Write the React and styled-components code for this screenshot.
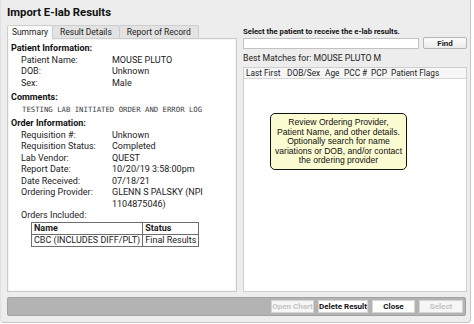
import React from 'react'
import styled, { createGlobalStyle } from 'styled-components'

const GlobalStyle = createGlobalStyle`
  html, body {
    margin: 0;
    padding: 0;
    background: #ffffff;
  }
  body {
    font-family: Roboto, "Liberation Sans", sans-serif;
    color: #1a1a1a;
  }
`

const patientRows = [
  ['Patient Name:', 'MOUSE PLUTO'],
  ['DOB:', 'Unknown'],
  ['Sex:', 'Male'],
]

const orderRows = [
  ['Requisition #:', 'Unknown'],
  ['Requisition Status:', 'Completed'],
  ['Lab Vendor:', 'QUEST'],
  ['Report Date:', '10/20/19 3:58:00pm'],
  ['Date Received:', '07/18/21'],
  ['Ordering Provider:', 'GLENN S PALSKY (NPI 1104875046)'],
]

const matchCols = [
  ['Last', 18],
  ['First', 23],
  ['DOB/Sex', 38],
  ['Age', 19],
  ['PCC #', 27],
  ['PCP', 20],
  ['Patient Flags', 77],
]

function App() {
  return (
    <>
      <GlobalStyle />
      <Window>
        <Title>Import E-lab Results</Title>
        <Main>
          <LeftColumn>
            <Tabs>
              <Tab $active>Summary</Tab>
              <Tab>Result Details</Tab>
              <Tab>Report of Record</Tab>
            </Tabs>
            <SummaryPanel>
              <Heading>Patient Information:</Heading>
              {patientRows.map(([label, value]) => (
                <Row key={label}>
                  <Label>{label}</Label>
                  <Value>{value}</Value>
                </Row>
              ))}
              <Heading $gap>Comments:</Heading>
              <Comment>TESTING LAB INITIATED ORDER AND ERROR LOG</Comment>
              <Heading $gap>Order Information:</Heading>
              {orderRows.map(([label, value]) => (
                <Row key={label}>
                  <Label>{label}</Label>
                  <Value>{value}</Value>
                </Row>
              ))}
              <Row>
                <Label>Orders Included:</Label>
              </Row>
              <OrdersTable>
                <thead>
                  <tr>
                    <th style={{ width: 102 }}>Name</th>
                    <th>Status</th>
                  </tr>
                </thead>
                <tbody>
                  <tr>
                    <td>CBC (INCLUDES DIFF/PLT)</td>
                    <td>Final Results</td>
                  </tr>
                </tbody>
              </OrdersTable>
            </SummaryPanel>
          </LeftColumn>
          <RightColumn>
            <SelectHeading>Select the patient to receive the e-lab results.</SelectHeading>
            <SearchRow>
              <SearchInput type="text" />
              <FindButton>Find</FindButton>
            </SearchRow>
            <MatchesLabel>Best Matches for: MOUSE PLUTO M</MatchesLabel>
            <MatchesTable>
              <MatchHeader>
                {matchCols.map(([name, w]) => (
                  <MatchCell key={name} style={{ width: w }}>{name}</MatchCell>
                ))}
              </MatchHeader>
              <Callout>
                Review Ordering Provider,<br />
                Patient Name, and other details.<br />
                Optionally search for name<br />
                variations or DOB, and/or contact<br />
                the ordering provider
              </Callout>
            </MatchesTable>
          </RightColumn>
        </Main>
        <ButtonBar>
          <BarButton disabled $w={43}>Open Chart</BarButton>
          <BarButton $w={50}>Delete Result</BarButton>
          <BarButton $w={43}>Close</BarButton>
          <BarButton disabled $w={44}>Select</BarButton>
        </ButtonBar>
      </Window>
    </>
  )
}

export default App

const Window = styled.div`
  width: 471px;
  height: 323px;
  box-sizing: border-box;
  background: #ededed;
  border-right: 1px solid #c6c6c6;
  border-bottom: 1px solid #c6c6c6;
  border-left: 1px solid #e0e0e0;
  border-bottom-right-radius: 4px;
  border-bottom-left-radius: 4px;
  display: flex;
  flex-direction: column;
`

const Title = styled.div`
  height: 25px;
  padding-left: 6px;
  display: flex;
  align-items: center;
  font-size: 11.3px;
  font-weight: 700;
  color: #111;
`

const Main = styled.div`
  display: flex;
  padding: 0 0 0 6px;
  gap: 4px;
  height: 267px;
`

const LeftColumn = styled.div`
  width: 230px;
  flex-shrink: 0;
  display: flex;
  flex-direction: column;
`

const Tabs = styled.div`
  height: 13px;
  display: flex;
  position: relative;
  z-index: 1;
`

const Tab = styled.div`
  box-sizing: border-box;
  height: 14px;
  padding: 0 7px;
  display: flex;
  align-items: center;
  font-size: 8.5px;
  color: #222;
  background: ${p => (p.$active ? '#fafafa' : '#e3e3e3')};
  border: 1px solid #cdcdcd;
  border-bottom: ${p => (p.$active ? '1px solid #fafafa' : '1px solid #cdcdcd')};
  margin-right: -1px;
  border-radius: 2px 2px 0 0;
  &:first-child {
    width: 46px;
    justify-content: center;
  }
`

const SummaryPanel = styled.div`
  flex: 1;
  box-sizing: border-box;
  background: #fff;
  border: 1px solid #cbcbcb;
  box-shadow: inset 0 0 0 1px #f4f4f4;
  padding: 4px 3px 0 3px;
  font-size: 9px;
  line-height: 11.5px;
`

const Heading = styled.div`
  font-weight: 700;
  color: #111;
  margin-top: ${p => (p.$gap ? '3px' : '0')};
`

const Row = styled.div`
  display: flex;
  padding-left: 10px;
`

const Label = styled.div`
  width: 91px;
  flex-shrink: 0;
  color: #222;
`

const Value = styled.div`
  width: 96px;
  color: #222;
`

const Comment = styled.div`
  padding-left: 11px;
  font-family: "DejaVu Sans Mono", "Liberation Mono", monospace;
  font-size: 7.3px;
  color: #3a3a3a;
`

const OrdersTable = styled.table`
  margin: 0 0 0 20px;
  border-collapse: collapse;
  width: 161px;
  font-size: 9px;
  line-height: 11px;
  th, td {
    border: 1px solid #6e6e6e;
    padding: 0 2px;
    text-align: left;
    white-space: nowrap;
    height: 11px;
  }
  th {
    font-weight: 700;
  }
`

const RightColumn = styled.div`
  width: 226px;
  box-sizing: border-box;
  flex-shrink: 0;
  padding-left: 2px;
  display: flex;
  flex-direction: column;
`

const SelectHeading = styled.div`
  height: 12px;
  display: flex;
  align-items: center;
  font-size: 7.7px;
  font-weight: 700;
  color: #111;
`

const SearchRow = styled.div`
  display: flex;
  gap: 4px;
  height: 12px;
`

const SearchInput = styled.input`
  box-sizing: border-box;
  width: 176px;
  height: 11px;
  margin: 1px 0 0 0;
  border: 1px solid #c2c2c2;
  background: #fff;
  padding: 0;
`

const FindButton = styled.button`
  box-sizing: border-box;
  width: 44px;
  height: 12px;
  padding: 0;
  border: 1px solid #b5b5b5;
  border-radius: 2px;
  background: linear-gradient(#fbfbfb, #ececec);
  font-family: Roboto, "Liberation Sans", sans-serif;
  font-size: 8px;
  font-weight: 700;
  color: #222;
`

const MatchesLabel = styled.div`
  height: 18px;
  display: flex;
  align-items: center;
  font-size: 8.7px;
  color: #222;
`

const MatchesTable = styled.div`
  flex: 1;
  position: relative;
  background: #fff;
  border: 1px solid #cfcfcf;
`

const MatchHeader = styled.div`
  display: flex;
  height: 10px;
  background: #f6f6f6;
  border-bottom: 1px solid #d6d6d6;
`

const MatchCell = styled.div`
  box-sizing: border-box;
  flex-shrink: 0;
  padding-left: 2px;
  display: flex;
  align-items: center;
  font-size: 8.3px;
  color: #222;
  white-space: nowrap;
`

const Callout = styled.div`
  position: absolute;
  left: 26px;
  top: 45px;
  width: 137px;
  height: 57px;
  box-sizing: border-box;
  background: #fcfcd2;
  border: 1.5px solid #111;
  border-radius: 5px;
  padding: 4px 0 0;
  text-align: center;
  font-family: "Liberation Sans", Arial, sans-serif;
  font-size: 8.6px;
  line-height: 9.6px;
  color: #111;
  white-space: nowrap;
`

const ButtonBar = styled.div`
  margin: 5px 4px 0 6px;
  height: 19px;
  box-sizing: border-box;
  background: #b3b3b3;
  border: 1px solid #a2a2a2;
  border-radius: 2px;
  display: flex;
  justify-content: flex-end;
  align-items: center;
  gap: 4px;
  padding-right: 2px;
`

const BarButton = styled.button`
  box-sizing: border-box;
  height: 13px;
  width: ${p => p.$w}px;
  padding: 0;
  border: 1px solid #d6d6d6;
  background: #fff;
  font-family: Roboto, "Liberation Sans", sans-serif;
  font-size: 8px;
  font-weight: 700;
  color: ${p => (p.disabled ? '#c4c4c4' : '#111')};
  white-space: nowrap;
  &:disabled {
    background: #f6f6f6;
  }
`
